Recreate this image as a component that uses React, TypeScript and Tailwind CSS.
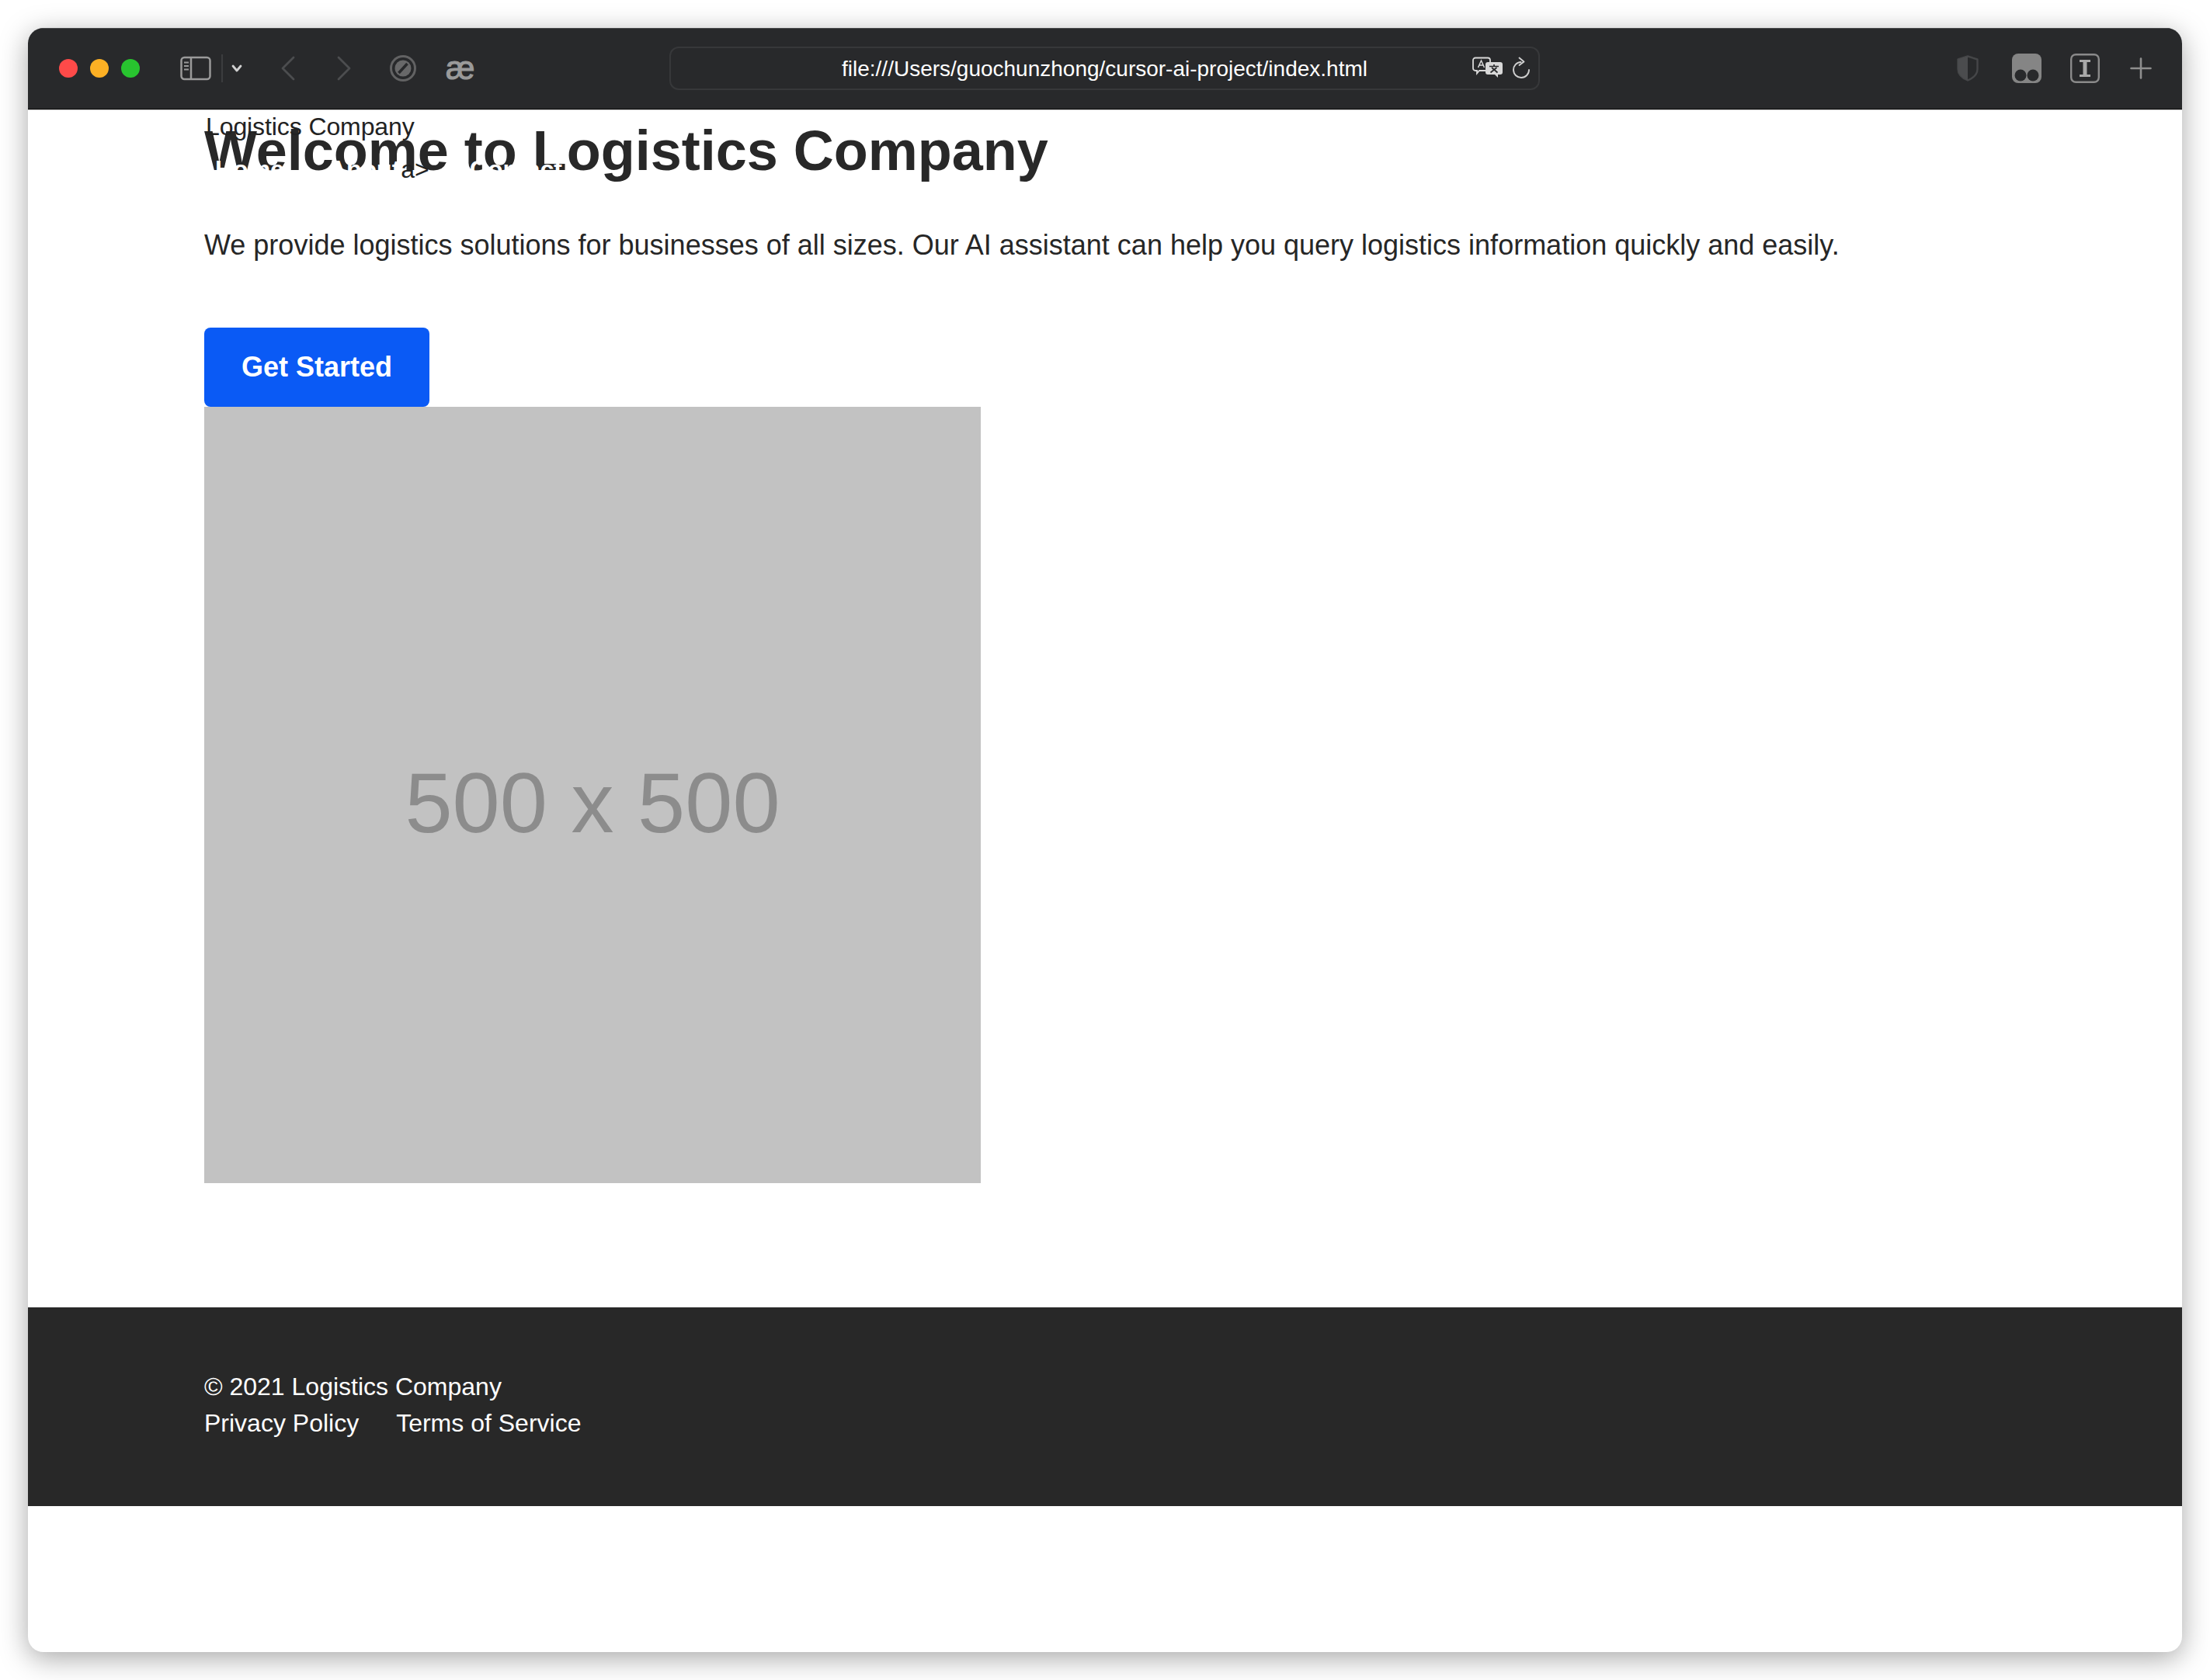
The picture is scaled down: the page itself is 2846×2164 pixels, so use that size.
import React from "react";

function TitleIcons() {
  return (
    <div className="flex items-center">
      <div className="flex items-center gap-[16px] pl-[40px]">
        <span className="w-[24px] h-[24px] rounded-full bg-[#fe4a49]" />
        <span className="w-[24px] h-[24px] rounded-full bg-[#fdb024]" />
        <span className="w-[24px] h-[24px] rounded-full bg-[#28c42f]" />
      </div>
      <svg className="ml-[52px]" width="40" height="32" viewBox="0 0 40 32" fill="none" stroke="#9a9a9a" strokeWidth="2.5">
        <rect x="1.5" y="2" width="37" height="28" rx="4" />
        <line x1="14" y1="2" x2="14" y2="30" />
        <line x1="5" y1="8.5" x2="11" y2="8.5" strokeWidth="2" />
        <line x1="5" y1="13" x2="11" y2="13" strokeWidth="2" />
        <line x1="5" y1="17.5" x2="11" y2="17.5" strokeWidth="2" />
      </svg>
      <span className="ml-[13px] w-[2px] h-[36px] bg-[#3c3d3f]" />
      <svg className="ml-[11px]" width="14" height="10" viewBox="0 0 14 10" fill="none" stroke="#d0d0d0" strokeWidth="2.8" strokeLinecap="round" strokeLinejoin="round">
        <path d="M2 2 L7 8 L12 2" />
      </svg>
      <svg className="ml-[50px]" width="18" height="32" viewBox="0 0 18 32" fill="none" stroke="#4c4d4f" strokeWidth="2.8" strokeLinecap="round" strokeLinejoin="round">
        <path d="M16 2 L2 16 L16 30" />
      </svg>
      <svg className="ml-[54px]" width="18" height="32" viewBox="0 0 18 32" fill="none" stroke="#4c4d4f" strokeWidth="2.8" strokeLinecap="round" strokeLinejoin="round">
        <path d="M2 2 L16 16 L2 30" />
      </svg>
      <svg className="ml-[50px]" width="34" height="34" viewBox="0 0 34 34">
        <circle cx="17" cy="17" r="15.5" fill="none" stroke="#626263" strokeWidth="3" />
        <circle cx="17" cy="17" r="10.5" fill="#686869" />
        <line x1="11.5" y1="23" x2="22.5" y2="11" stroke="#28292b" strokeWidth="3.5" />
      </svg>
      <span className="ml-[38px] text-[#9a9a9a] text-[42px] leading-[34px] font-['Liberation_Sans',sans-serif] [-webkit-text-stroke:1.2px_#9a9a9a]">æ</span>
    </div>
  );
}

function RightIcons() {
  return (
    <div className="flex items-center pr-[39px]">
      <svg width="28" height="34" viewBox="0 0 28 34">
        <path d="M14 1.5 L26.5 5.5 V18 C26.5 25 20 30 14 32.5 C8 30 1.5 25 1.5 18 V5.5 Z" fill="none" stroke="#454648" strokeWidth="2.4" strokeLinejoin="round" />
        <path d="M14 1.5 L1.5 5.5 V18 C1.5 25 8 30 14 32.5 Z" fill="#4b4c4e" />
      </svg>
      <svg className="ml-[43px]" width="38" height="38" viewBox="0 0 38 38">
        <rect width="38" height="38" rx="8" fill="#858585" />
        <circle cx="11" cy="28" r="7.5" fill="#28292b" />
        <circle cx="27" cy="28" r="7.5" fill="#28292b" />
      </svg>
      <svg className="ml-[37px]" width="38" height="38" viewBox="0 0 38 38">
        <rect x="1.2" y="1.2" width="35.6" height="35.6" rx="6" fill="none" stroke="#8a8a8a" strokeWidth="2.4" />
        <path d="M12 8 H26 V11 H21.5 V27 H26 V30 H12 V27 H16.5 V11 H12 Z" fill="#a8a8a8" />
      </svg>
      <svg className="ml-[39px]" width="28" height="28" viewBox="0 0 28 28" stroke="#8e8e8e" strokeWidth="2.6" strokeLinecap="round">
        <line x1="14" y1="1.5" x2="14" y2="26.5" />
        <line x1="1.5" y1="14" x2="26.5" y2="14" />
      </svg>
    </div>
  );
}

export default function App() {
  return (
    <div className="bg-white w-full h-[2164px] p-[36px] font-['Liberation_Sans',sans-serif] overflow-hidden">
      <div className="h-[2092px] rounded-[20px] bg-white shadow-[0_8px_36px_rgba(0,0,0,0.35)] flex flex-col overflow-hidden">
        <div className="h-[105px] shrink-0 bg-[#28292b] border-b border-b-[#0c0c0c] shadow-[inset_0_1px_0_#4a4b4d] flex items-start pt-[18px]">
          <div className="flex-1 flex justify-between items-center h-[68px] relative">
            <TitleIcons />
            <RightIcons />
            <div className="absolute left-[826px] top-[6px] w-[1121px] h-[56px] rounded-[12px] border-[2px] border-[#37383a] flex items-center justify-center text-white text-[28px] pt-[2px]">
              file:///Users/guochunzhong/cursor-ai-project/index.html
              <svg className="absolute left-[1032px] top-[11px]" width="40" height="28" viewBox="0 0 40 28">
                <path d="M4 1.5 H20 a3 3 0 0 1 3 3 V15 a3 3 0 0 1 -3 3 H9 L6 21.5 V18 H4 a3 3 0 0 1 -3 -3 V4.5 a3 3 0 0 1 3 -3 Z" fill="#28292b" stroke="#d8d8d8" strokeWidth="1.8" />
                <path d="M20 7 H36 a3 3 0 0 1 3 3 V20 a3 3 0 0 1 -3 3 H33 V27 L29 23 H20 a3 3 0 0 1 -3 -3 V10 a3 3 0 0 1 3 -3 Z" fill="#d8d8d8" />
                <path d="M22 12.5 H34 M28 10 V13 M23.5 20.5 L31.5 14 M32.5 20.5 L25 14" stroke="#28292b" strokeWidth="1.7" fill="none" />
                <path d="M7.5 14 L11.5 5 L15.5 14 M9 11 H14" stroke="#d8d8d8" strokeWidth="1.5" fill="none" />
              </svg>
              <svg className="absolute left-[1083px] top-[11px]" width="24" height="28" viewBox="0 0 24 28" fill="none" stroke="#cfcfcf" strokeWidth="1.9" strokeLinecap="round" strokeLinejoin="round">
                <path d="M11.5 7 A10 10 0 1 0 22 17" />
                <path d="M9.5 1.5 L15.5 6.5 L9.5 11" />
              </svg>
            </div>
          </div>
        </div>

        <main className="relative flex-1 flex flex-col border-t border-t-[#c4c4c4]">
          <div className="px-[227px] flex flex-col items-start">
            <div className="absolute left-[229px] top-[0px] text-[32px] leading-[36px] text-[#222] pt-[3px] z-10 tracking-[-0.1px]">Logistics Company</div>
            <h1 className="pt-[10px] text-[72px] leading-[84px] font-bold text-[#282828]">Welcome to Logistics Company</h1>
            <div className="absolute left-[241px] top-[58px] z-20 flex items-baseline text-[32px] leading-[36px] font-bold text-white">
              <span>Home</span>
              <span className="ml-[57px]">About</span>
              <span className="ml-[1px] font-normal text-[#222]">a&gt;</span>
              <span className="ml-[52px]">Contact</span>
            </div>
            <p className="mt-[56px] text-[36px] leading-[48px] text-[#262626] whitespace-nowrap">
              We provide logistics solutions for businesses of all sizes. Our AI assistant can help you query logistics information quickly and easily.
            </p>
            <button className="mt-[82px] w-[290px] h-[102px] rounded-[8px] bg-[#0a5af5] text-white text-[36px] font-bold">Get Started</button>
            <div className="w-[1000px] h-[1000px] bg-[#c2c2c2] flex items-center justify-center text-[#8c8c8c] text-[110px] pt-[18px]">
              <span className="blur-[0.5px]">500 x 500</span>
            </div>
          </div>
          <footer className="mt-[160px] h-[256px] bg-[#282828] px-[227px] pt-[79px] text-white text-[32px] leading-[47px]">
            <div>© 2021 Logistics Company</div>
            <div className="flex gap-[48px]">
              <span>Privacy Policy</span>
              <span>Terms of Service</span>
            </div>
          </footer>
        </main>
      </div>
    </div>
  );
}
